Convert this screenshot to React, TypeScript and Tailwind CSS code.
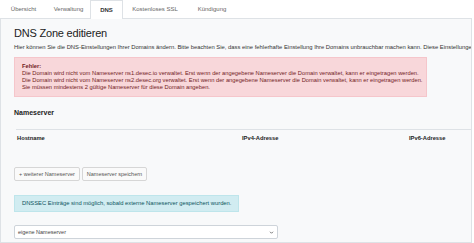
export default function App() {
  const tabs = [
    { label: 'Übersicht', width: 'w-[47px]' },
    { label: 'Verwaltung', width: 'w-[43px]' },
    { label: 'DNS', width: 'w-[33px]' },
    { label: 'Kostenloses SSL', width: 'w-[64px]' },
    { label: 'Kündigung', width: 'w-[50px]' },
  ];

  return (
    <div className="h-[243px] w-[474px] overflow-hidden bg-white font-['Liberation_Sans',Arial,sans-serif] text-[#333]">
      <nav className="flex h-[18px] items-end text-[6px] text-[#666]">
        {tabs.map((tab) =>
          tab.label === 'DNS' ? (
            <div
              key={tab.label}
              className={`relative -mb-px flex h-[19px] ${tab.width} items-center justify-center border border-b-0 border-[#dee2e6] bg-white font-bold text-[#333]`}
            >
              {tab.label}
            </div>
          ) : (
            <div key={tab.label} className={`flex h-[18px] ${tab.width} items-center justify-center`}>
              {tab.label}
            </div>
          )
        )}
      </nav>

      <section className="h-[225px] w-[472px] overflow-hidden border border-[#dee2e6] bg-[#f8f9fa] pl-[13px]">
        <h1 className="mt-[8px] text-[11px] leading-[13px] tracking-[-0.2px] text-[#222]">DNS Zone editieren</h1>
        <p className="mt-[4px] whitespace-nowrap text-[5.85px] leading-[7px]">
          Hier können Sie die DNS-Einstellungen Ihrer Domains ändern. Bitte beachten Sie, dass eine fehlerhafte Einstellung Ihre Domains unbrauchbar machen kann. Diese Einstellungen sollten nur von erfahrenen Nutzern geändert werden.
        </p>

        <div className="mt-[6px] w-[413px] border border-[#f5c6cb] bg-[#f8d7da] px-[7px] py-[5px] text-[5.75px] leading-[7px] text-[#721c24]">
          <p className="font-bold">Fehler:</p>
          <p className="whitespace-nowrap">Die Domain wird nicht vom Nameserver ns1.desec.io verwaltet. Erst wenn der angegebene Nameserver die Domain verwaltet, kann er eingetragen werden.</p>
          <p className="whitespace-nowrap">Die Domain wird nicht vom Nameserver ns2.desec.org verwaltet. Erst wenn der angegebene Nameserver die Domain verwaltet, kann er eingetragen werden.</p>
          <p>Sie müssen mindestens 2 gültige Nameserver für diese Domain angeben.</p>
        </div>

        <h2 className="mt-[11px] text-[7px] font-bold leading-[9px] text-[#222]">Nameserver</h2>

        <div className="mt-[12px] ml-[2px] grid w-[500px] grid-cols-[226px_167px_1fr] border-t border-[#dee2e6] pt-[5px] text-[5.75px] font-bold leading-[7px] text-[#222]">
          <span className="pl-[1px]">Hostname</span>
          <span>IPv4-Adresse</span>
          <span>IPv6-Adresse</span>
        </div>

        <div className="mt-[25px] flex gap-[2px] text-[5.5px] text-[#555]">
          <button className="h-[14px] rounded-[2px] border border-[#d6d6d6] bg-[#fafafa] px-[4px]">+ weiterer Nameserver</button>
          <button className="h-[14px] rounded-[2px] border border-[#d6d6d6] bg-[#fafafa] px-[4px]">Nameserver speichern</button>
        </div>

        <div className="mt-[14px] flex h-[17px] w-[225px] items-center whitespace-nowrap border border-[#bee5eb] bg-[#d1ecf1] pl-[7px] text-[5.8px] text-[#0c5460]">
          DNSSEC Einträge sind möglich, sobald externe Nameserver gespeichert wurden.
        </div>

        <div className="mt-[13px] flex h-[14px] w-[264px] items-center justify-between rounded-[2px] border border-[#ced4da] bg-white pl-[3px] pr-[3px] text-[5.5px] text-[#444]">
          <span>eigene Nameserver</span>
          <svg viewBox="0 0 10 10" className="h-[5px] w-[5px]" fill="none" stroke="#555" strokeWidth="1.6">
            <path d="M2 3.5l3 3 3-3" />
          </svg>
        </div>
      </section>
    </div>
  );
}
